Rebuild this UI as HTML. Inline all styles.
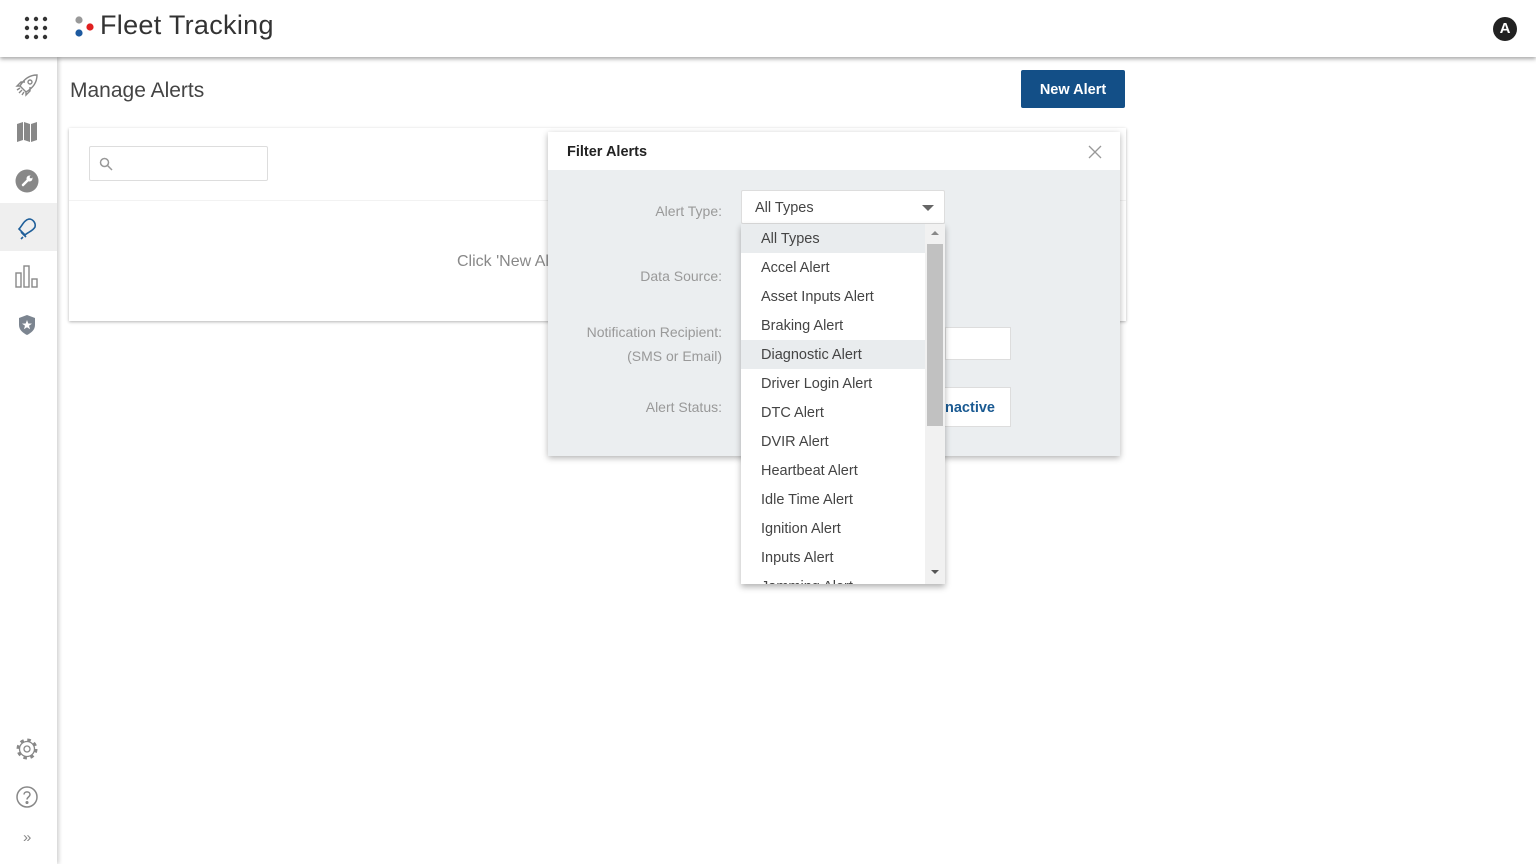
<!DOCTYPE html>
<html><head><style>
*{box-sizing:border-box;margin:0;padding:0}
body{width:1536px;height:864px;overflow:hidden;background:#fff;font-family:"Liberation Sans",sans-serif;position:relative;color:#333}
.abs{position:absolute}
.hdr{left:0;top:0;width:1536px;height:57px;background:#fff;box-shadow:0 2px 4px rgba(0,0,0,.35);z-index:5}
.side{left:0;top:57px;width:57px;height:807px;background:#fff;box-shadow:2px 0 4px rgba(0,0,0,.18);z-index:4}
.lbl{right:814px;font-size:14px;color:#999;text-align:right}
.item{height:29px;line-height:31px;padding-left:20px;font-size:14.5px;color:#444}
</style></head><body>
<div class="abs hdr">
  <svg class="abs" style="left:24px;top:16px" width="24" height="24"><g fill="#333">
  <circle cx="3" cy="3" r="2.2"/><circle cx="12" cy="3" r="2.2"/><circle cx="21" cy="3" r="2.2"/>
  <circle cx="3" cy="12" r="2.2"/><circle cx="12" cy="12" r="2.2"/><circle cx="21" cy="12" r="2.2"/>
  <circle cx="3" cy="21" r="2.2"/><circle cx="12" cy="21" r="2.2"/><circle cx="21" cy="21" r="2.2"/></g></svg>
  <svg class="abs" style="left:74px;top:15px" width="24" height="24"><circle cx="5" cy="5" r="3.6" fill="#999"/><circle cx="16" cy="12" r="3.6" fill="#e02020"/><circle cx="5" cy="18" r="3.6" fill="#1d5aa0"/></svg>
  <div class="abs" style="left:100px;top:10px;font-size:27px;color:#333;letter-spacing:.3px">Fleet Tracking</div>
  <div class="abs" style="left:1493px;top:17px;width:24px;height:24px;border-radius:50%;background:#222;color:#fff;font-weight:bold;font-size:15px;text-align:center;line-height:24px">A</div>
</div>
<div class="abs side">
  <svg class="abs" style="left:15px;top:16px" width="24" height="24" fill="none" stroke="#888" stroke-width="1.4"><path d="M8 16 L5 13 C9 6 15 2 22 2 C22 9 18 15 11 19 Z M5 13 L2 13 L6 9 L10 9 M11 19 L11 22 L15 18 L15 14 M4 20 L7 17 M2 17 L5 15 M7 22 L9 19"/><circle cx="15" cy="9" r="2"/></svg>
  <svg class="abs" style="left:16px;top:64px" width="22" height="22" fill="#888"><path d="M1 3 L7 1 L7 19 L1 21 Z M8 1 L14 3 L14 21 L8 19 Z M15 3 L21 1 L21 19 L15 21 Z"/></svg>
  <svg class="abs" style="left:15px;top:112px" width="24" height="24"><circle cx="12" cy="12" r="11.5" fill="#888"/><path d="M8 16 L13 11" stroke="#fff" stroke-width="2.5" stroke-linecap="round"/><circle cx="14.5" cy="9.5" r="3" fill="#fff"/><circle cx="16" cy="8" r="1.3" fill="#888"/></svg>
  <div class="abs" style="left:0;top:146px;width:57px;height:48px;background:#efefef"></div>
  <svg class="abs" style="left:15px;top:159px" width="24" height="26" fill="none" stroke="#1f5f9a" stroke-width="1.6"><path d="M4 13 C7 10 9 4 14 3 C18 3 21 7 20 11 C18 15 13 16 10 19 Z M6 16 L11 21 M8 21 L6 23"/></svg>
  <svg class="abs" style="left:15px;top:208px" width="24" height="24" fill="none" stroke="#888" stroke-width="1.4"><rect x="1" y="8" width="5" height="14"/><rect x="9" y="1" width="5" height="21"/><rect x="17" y="14" width="5" height="8"/></svg>
  <svg class="abs" style="left:17px;top:257px" width="20" height="22"><path d="M10 1 L18 4 L18 11 C18 16 14 19 10 21 C6 19 2 16 2 11 L2 4 Z" fill="#7c8590"/><path d="M10 6 L11.3 9.5 L15 9.6 L12 11.8 L13.1 15.3 L10 13.2 L6.9 15.3 L8 11.8 L5 9.6 L8.7 9.5 Z" fill="#fff"/></svg>
  <svg class="abs" style="left:16px;top:681px" width="22" height="22" fill="none" stroke="#888" stroke-width="1.3"><circle cx="11" cy="11" r="7.5"/><circle cx="11" cy="11" r="9" stroke-width="3" stroke-dasharray="3.5 3.57"/><circle cx="11" cy="11" r="3"/></svg>
  <svg class="abs" style="left:16px;top:729px" width="22" height="22" fill="none" stroke="#888" stroke-width="1.5"><circle cx="11" cy="11" r="10"/><path d="M8 8.5 C8 5 14 5 14 8.5 C14 11 11 11 11 13.5"/><circle cx="11" cy="16.5" r=".8" fill="#888"/></svg>
  <div class="abs" style="left:23px;top:772px;font-size:15px;color:#888">»</div>
</div>
<div class="abs" style="left:70px;top:79px;font-size:21px;color:#444">Manage Alerts</div>
<div class="abs" style="left:1021px;top:70px;width:104px;height:38px;background:#134f87;color:#fff;font-weight:bold;font-size:14.5px;text-align:center;line-height:40px;border-radius:2px">New Alert</div>
<div class="abs" style="left:69px;top:128px;width:1057px;height:193px;background:#fff;box-shadow:0 1px 3px rgba(0,0,0,.3)">
  <div class="abs" style="left:20px;top:18px;width:179px;height:35px;border:1px solid #ddd;border-radius:2px"></div>
  <svg class="abs" style="left:30px;top:29px" width="14" height="14" fill="none" stroke="#999" stroke-width="1.5"><circle cx="5.5" cy="5.5" r="4"/><path d="M8.5 8.5 L13 13"/></svg>
  <div class="abs" style="left:0;top:72px;width:1057px;height:1px;background:#f2f2f2"></div>
  <div class="abs" style="left:388px;top:125px;font-size:16px;color:#888">Click 'New Alert'</div>
</div>
<div class="abs" style="left:548px;top:132px;width:572px;height:324px;background:#ebeef0;box-shadow:0 2px 6px rgba(0,0,0,.3);z-index:6">
  <div class="abs" style="left:0;top:0;width:572px;height:38px;background:#fff"></div>
  <div class="abs" style="left:19px;top:12px;font-size:14.5px;font-weight:bold;color:#222">Filter Alerts</div>
  <svg class="abs" style="left:540px;top:13px" width="14" height="14" stroke="#999" stroke-width="1.3"><path d="M1 1L13 13M13 1L1 13"/></svg>
  <div class="abs lbl" style="left:0;width:174px;top:71px">Alert Type:</div>
  <div class="abs lbl" style="left:0;width:174px;top:136px">Data Source:</div>
  <div class="abs lbl" style="left:0;width:174px;top:188px;line-height:24px">Notification Recipient:<br>(SMS or Email)</div>
  <div class="abs lbl" style="left:0;width:174px;top:267px">Alert Status:</div>
  <div class="abs" style="left:193px;top:58px;width:204px;height:34px;background:#fff;border:1px solid #ddd;border-radius:2px;font-size:14.5px;line-height:34px;padding-left:13px;color:#444">All Types</div>
  <div class="abs" style="left:374px;top:73px;border:6px solid transparent;border-top-color:#666"></div>
  <div class="abs" style="left:193px;top:126px;width:3px;height:35px;background:#5a8ab0"></div>
  <div class="abs" style="left:397px;top:195px;width:66px;height:33px;background:#fff;border:1px solid #ddd"></div>
  <div class="abs" style="left:390px;top:255px;width:73px;height:40px;background:#fff;border:1px solid #ddd;color:#1a5a92;font-weight:bold;font-size:14.5px;line-height:40px;padding-left:6px">nactive</div>
</div>
<div class="abs" style="left:741px;top:224px;width:204px;height:360px;background:#fff;box-shadow:0 3px 6px rgba(0,0,0,.3);overflow:hidden;z-index:7">
  <div style="width:184px">
  <div class="item" style="background:#e9ecee">All Types</div>
  <div class="item">Accel Alert</div>
  <div class="item">Asset Inputs Alert</div>
  <div class="item">Braking Alert</div>
  <div class="item" style="background:#e9ecee">Diagnostic Alert</div>
  <div class="item">Driver Login Alert</div>
  <div class="item">DTC Alert</div>
  <div class="item">DVIR Alert</div>
  <div class="item">Heartbeat Alert</div>
  <div class="item">Idle Time Alert</div>
  <div class="item">Ignition Alert</div>
  <div class="item">Inputs Alert</div>
  <div class="item">Jamming Alert</div>
  </div>
  <div class="abs" style="left:184px;top:0;width:20px;height:360px;background:#f1f1f1"></div>
  <div class="abs" style="left:186px;top:20px;width:16px;height:182px;background:#c1c1c1"></div>
  <div class="abs" style="left:190px;top:7px;border:4px solid transparent;border-bottom-color:#888;border-top:0"></div>
  <div class="abs" style="left:190px;top:346px;border:4px solid transparent;border-top-color:#555;border-bottom:0"></div>
</div>
</body></html>
